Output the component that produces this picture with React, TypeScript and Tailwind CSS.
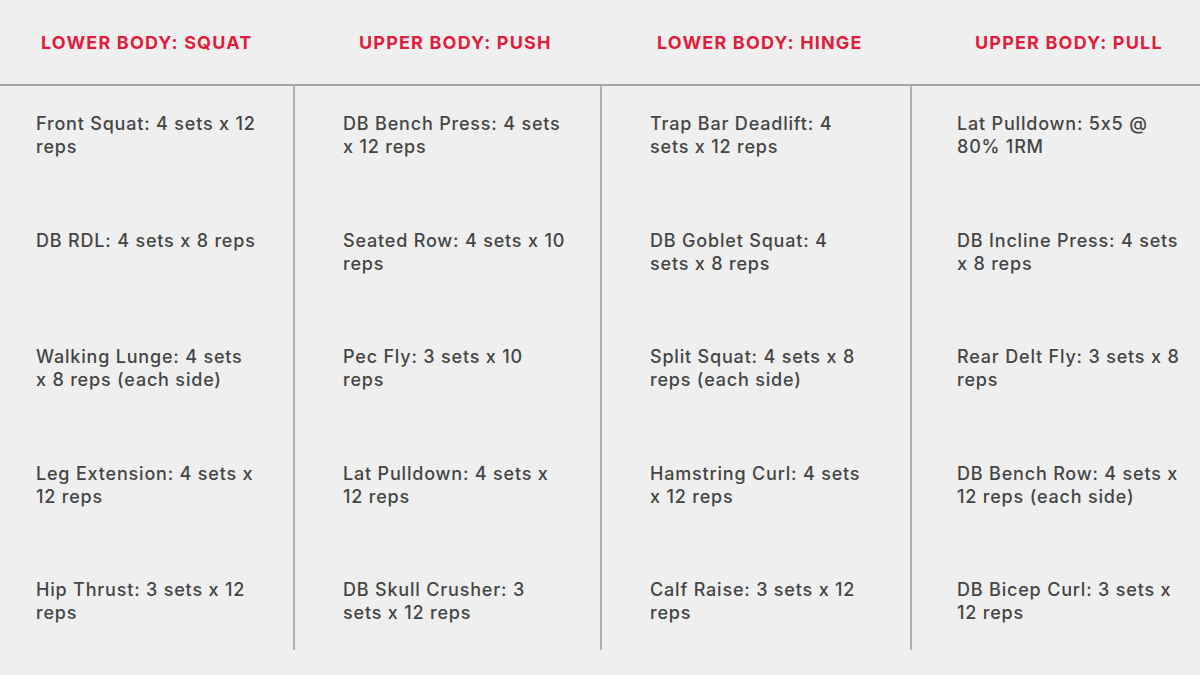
import React from 'react';

const columns = [
  {
    title: 'LOWER BODY: SQUAT',
    titlePad: 'pl-[41px]',
    width: 'w-[293px]',
    pad: 'pl-[36px]',
    textW: 'w-[220px]',
    items: [
      'Front Squat: 4 sets x 12 reps',
      'DB RDL: 4 sets x 8 reps',
      'Walking Lunge: 4 sets x 8 reps (each side)',
      'Leg Extension: 4 sets x 12 reps',
      'Hip Thrust: 3 sets x 12 reps',
    ],
  },
  {
    title: 'UPPER BODY: PUSH',
    titlePad: 'pl-[66px]',
    width: 'w-[307px]',
    pad: 'pl-[48px]',
    textW: 'w-[224px]',
    items: [
      'DB Bench Press: 4 sets x 12 reps',
      'Seated Row: 4 sets x 10 reps',
      'Pec Fly: 3 sets x 10 reps',
      'Lat Pulldown: 4 sets x 12 reps',
      'DB Skull Crusher: 3 sets x 12 reps',
    ],
  },
  {
    title: 'LOWER BODY: HINGE',
    titlePad: 'pl-[57px]',
    width: 'w-[310px]',
    pad: 'pl-[48px]',
    textW: 'w-[220px]',
    items: [
      'Trap Bar Deadlift: 4 sets x 12 reps',
      'DB Goblet Squat: 4 sets x 8 reps',
      'Split Squat: 4 sets x 8 reps (each side)',
      'Hamstring Curl: 4 sets x 12 reps',
      'Calf Raise: 3 sets x 12 reps',
    ],
  },
  {
    title: 'UPPER BODY: PULL',
    titlePad: 'pl-[65px]',
    width: 'w-[290px]',
    pad: 'pl-[45px]',
    textW: 'w-[224px]',
    items: [
      'Lat Pulldown: 5x5 @ 80% 1RM',
      'DB Incline Press: 4 sets x 8 reps',
      'Rear Delt Fly: 3 sets x 8 reps',
      'DB Bench Row: 4 sets x 12 reps (each side)',
      'DB Bicep Curl: 3 sets x 12 reps',
    ],
  },
];

const WorkoutTable = () => {
  return (
    <div
      className="w-[1200px] h-[675px] bg-[#efefef] text-[#454545] [font-feature-settings:'calt'_0]"
      style={{ fontFamily: 'Inter, "Noto Sans", sans-serif' }}
    >
      {/* Header */}
      <div className="flex h-[86px] border-b-2 border-[#a6a6a6]">
        {columns.map((col, i) => (
          <div key={i} className={`${col.width} ${col.titlePad} flex items-center`}>
            <span className="text-[18px] font-bold text-[#e11d3c] tracking-[0.065em] whitespace-nowrap">
              {col.title}
            </span>
          </div>
        ))}
      </div>

      {/* Body */}
      <div className="flex h-[564px]">
        {columns.map((col, i) => (
          <div
            key={i}
            className={`${col.width} ${col.pad} pt-[26px] ${i > 0 ? 'border-l-2 border-[#b0b0b0]' : ''}`}
          >
            {col.items.map((item, j) => (
              <div key={j} className="h-[116.5px]">
                <p className={`${col.textW} text-[18px] font-medium leading-[23px] tracking-[0.045em]`}>{item}</p>
              </div>
            ))}
          </div>
        ))}
      </div>
    </div>
  );
};

export default WorkoutTable;
